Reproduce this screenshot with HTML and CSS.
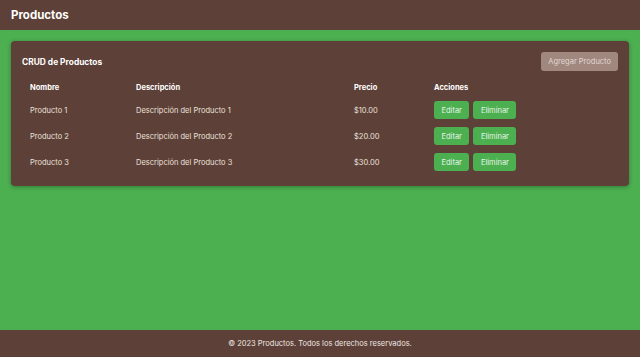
FILE: index.html
```html
<!DOCTYPE html>
<html lang="es">
<head>
    <meta charset="UTF-8">
    <meta name="viewport" content="width=device-width, initial-scale=1.0">
    <title>Productos</title>
    <link rel="stylesheet" href="styles.css">
</head>
<body>
    <header class="navbar">
        <h1>Productos</h1>
    </header>

    <main class="content">
        <div class="card">
            <div class="card-head">
                <h2>CRUD de Productos</h2>
                <button class="btn-add">Agregar Producto</button>
            </div>
            <table class="products">
                <thead>
                    <tr>
                        <th class="col-name">Nombre</th>
                        <th class="col-desc">Descripción</th>
                        <th class="col-price">Precio</th>
                        <th>Acciones</th>
                    </tr>
                </thead>
                <tbody>
                    <tr>
                        <td>Producto 1</td>
                        <td>Descripción del Producto 1</td>
                        <td>$10.00</td>
                        <td><button class="btn">Editar</button><button class="btn">Eliminar</button></td>
                    </tr>
                    <tr>
                        <td>Producto 2</td>
                        <td>Descripción del Producto 2</td>
                        <td>$20.00</td>
                        <td><button class="btn">Editar</button><button class="btn">Eliminar</button></td>
                    </tr>
                    <tr>
                        <td>Producto 3</td>
                        <td>Descripción del Producto 3</td>
                        <td>$30.00</td>
                        <td><button class="btn">Editar</button><button class="btn">Eliminar</button></td>
                    </tr>
                </tbody>
            </table>
        </div>
    </main>

    <footer>
        &copy; 2023 Productos. Todos los derechos reservados.
    </footer>
</body>
</html>
```

FILE: styles.css
```css
body {
    font-family: Inter, "Liberation Sans", sans-serif;
    margin: 0;
    min-height: 100vh;
    display: flex;
    flex-direction: column;
    background: #4caf50;
    color: #ece0dc;
}
.navbar, footer {
    background: #5d4037;
    color: #fff;
}
.navbar {
    height: 30px;
    padding: 0 11px;
    display: flex;
    align-items: center;
}
.navbar h1 {
    margin: 0;
    font-size: 11.5px;
    font-weight: 700;
}
.content {
    flex: 1;
    padding: 11px;
}
.card {
    background: #5d4037;
    border-radius: 4px;
    padding: 11px;
    box-shadow: 0 1px 4px rgba(0,0,0,0.3);
}
.card-head {
    display: flex;
    justify-content: space-between;
    align-items: center;
    margin-bottom: 6px;
}
.card-head h2 {
    margin: 0;
    font-size: 8.4px;
    font-weight: 700;
    color: #fff;
}
.btn-add {
    font-family: inherit;
    font-size: 7.5px;
    background: #a1887f;
    color: #e0d6d2;
    border: none;
    border-radius: 3px;
    height: 19px;
    padding: 0 7px;
}
.products {
    width: 100%;
    border-collapse: collapse;
    font-size: 7.5px;
}
.products th {
    text-align: left;
    font-weight: 700;
    color: #fff;
    padding: 0 8px;
    height: 20px;
}
.products td {
    padding: 4px 8px;
    height: 18px;
}
.col-name { width: 90px; }
.col-desc { width: 202px; }
.col-price { width: 64px; }
.btn {
    font-family: inherit;
    font-size: 7.5px;
    background: #4caf50;
    color: #e8f5e9;
    border: none;
    border-radius: 3px;
    height: 18px;
    padding: 0 7.5px;
    margin-right: 4px;
}
footer {
    height: 27px;
    display: flex;
    align-items: center;
    justify-content: center;
    font-size: 7.5px;
    color: #efe6e2;
}
```
